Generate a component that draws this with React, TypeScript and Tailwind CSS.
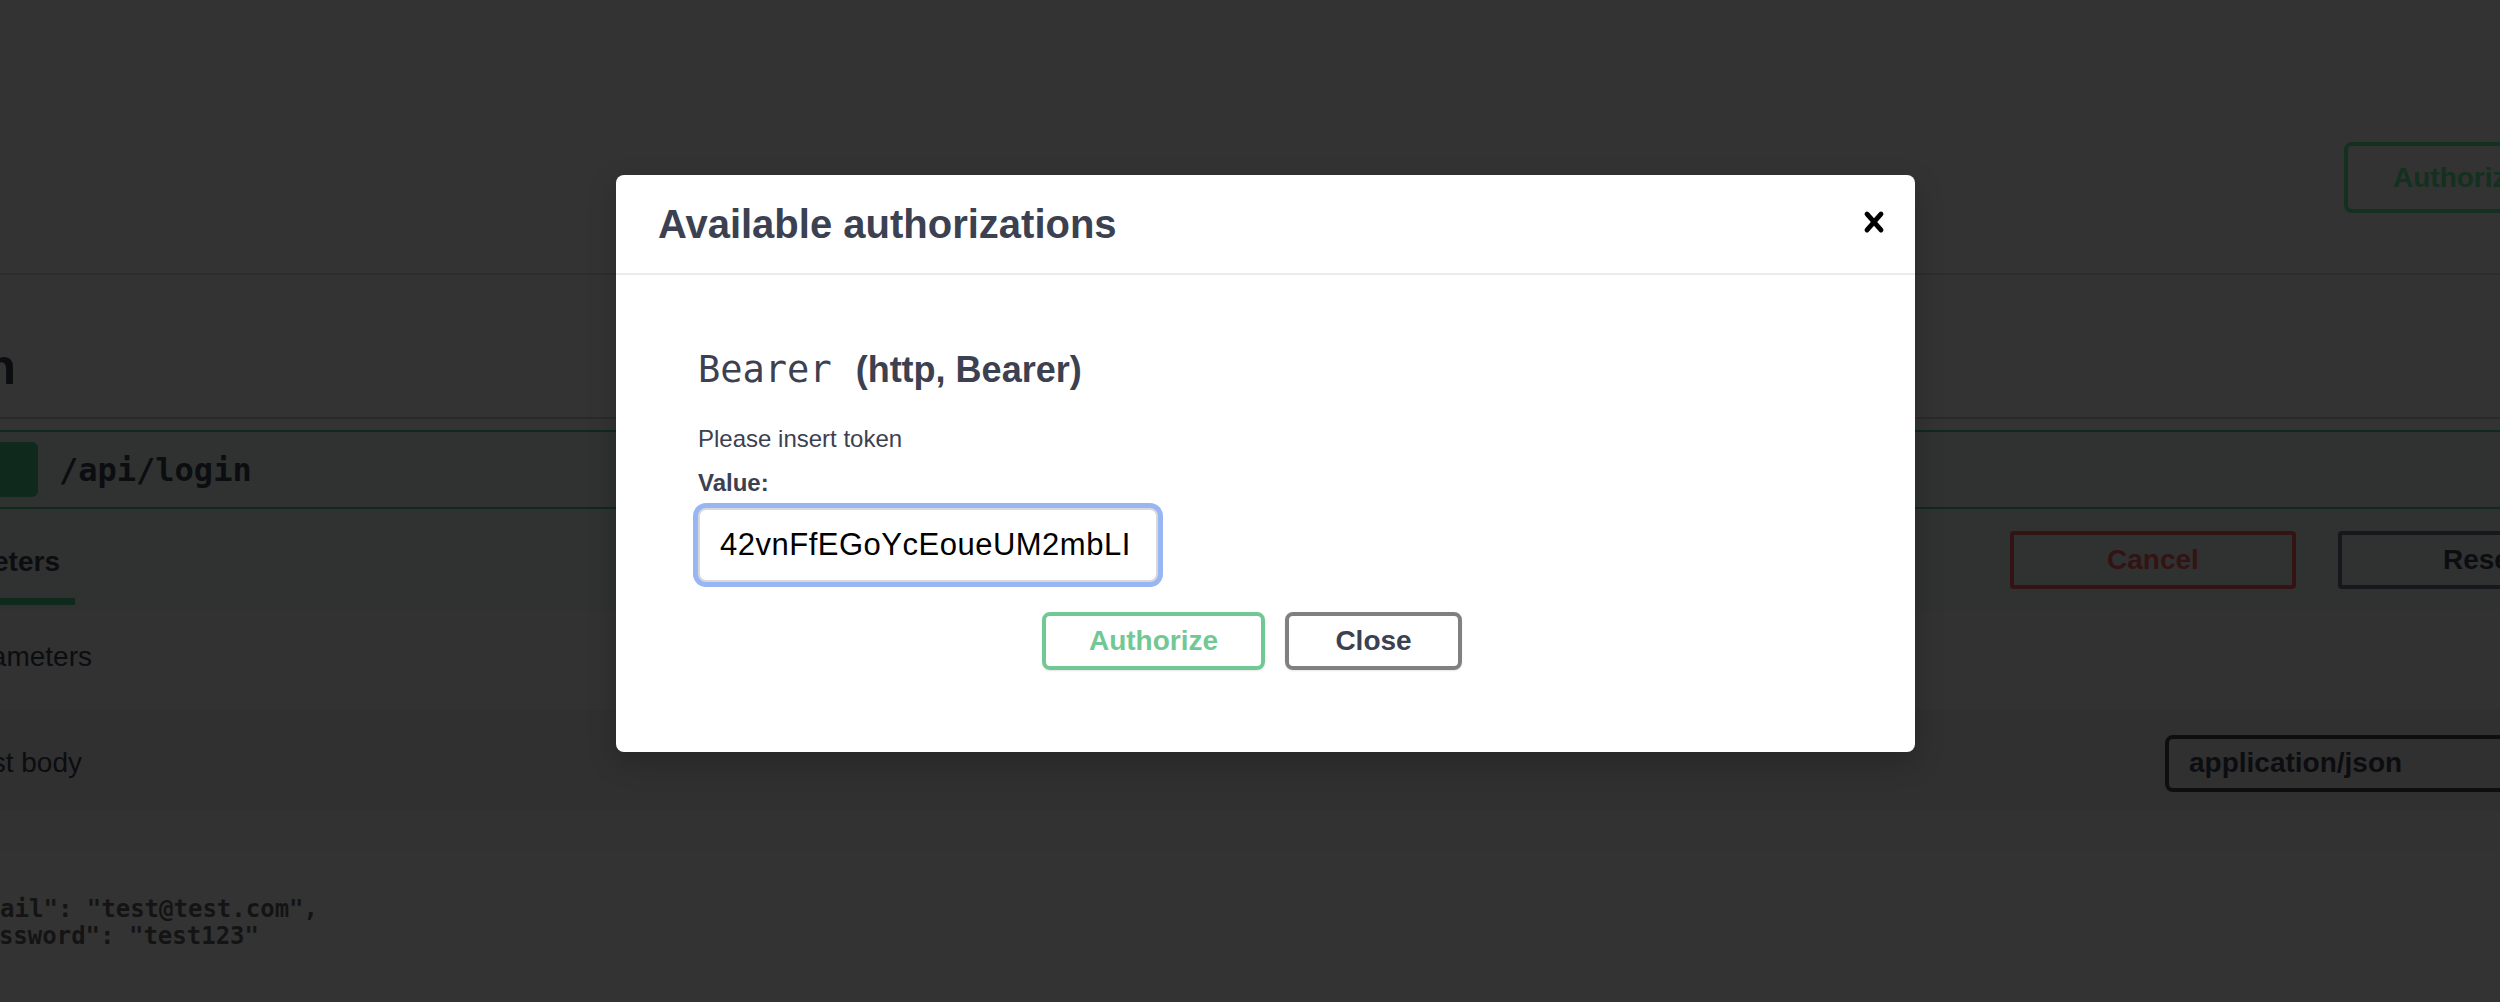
import React from "react";

const dimText = "text-[#0c0d10]";

function ClipLeft({ width, children, className }: { width: string; children: React.ReactNode; className?: string }) {
  return (
    <div className={`flex shrink-0 justify-end overflow-hidden ${width} ${className ?? ""}`}>
      <span className="whitespace-nowrap">{children}</span>
    </div>
  );
}

export default function App() {
  return (
    <div className="relative h-[1002px] w-[2500px] overflow-hidden bg-[#333333] font-['Liberation_Sans',Arial,sans-serif]">
      {/* dimmed page behind */}
      <div className="flex flex-col">
        {/* scheme container */}
        <div className="flex h-[275px] items-start border-b-2 border-[#2d2d2d] pl-[2344px] pt-[142px]">
          <div className="flex h-[71px] w-[260px] shrink-0 items-center rounded-[8px] border-4 border-[#14301f] pl-[45px] text-[28px] font-bold text-[#14301f]">
            Authorize
          </div>
        </div>
        {/* tag header */}
        <div className="flex h-[144px] items-start border-b-2 border-[#2a2a2b] pt-[62px]">
          <ClipLeft width="w-[16px]" className={`text-[50px] font-bold leading-[60px] ${dimText}`}>
            Authentication
          </ClipLeft>
        </div>
        {/* opblock */}
        <div className="mt-[11px] flex flex-col border-t-2 border-[#0f291d] bg-[#2f3231]">
          <div className="flex h-[77px] items-center gap-[21px] border-b-2 border-[#0f291d]">
            <div className="h-[55px] w-[38px] shrink-0 rounded-r-[6px] bg-[#0f291d]" />
            <span className={`font-['DejaVu_Sans_Mono',monospace] text-[32px] font-bold ${dimText}`}>/api/login</span>
          </div>
          {/* tabs row */}
          <div className="flex h-[101px] items-center">
            <div className="flex h-full w-[75px] shrink-0 flex-col justify-end">
              <div className="flex flex-1 items-center pt-[16px]">
                <ClipLeft width="w-[60px]" className={`text-[28px] font-bold ${dimText}`}>Parameters</ClipLeft>
              </div>
              <div className="mb-[5px] h-[7px] w-[75px] bg-[#0f2a1d]" />
            </div>
            <div className="ml-[1935px] flex shrink-0 items-center gap-[42px]">
              <div className="flex h-[58px] w-[286px] shrink-0 items-center justify-center rounded-[4px] border-4 border-[#331313] text-[28px] font-bold text-[#331313]">
                Cancel
              </div>
              <div className="flex h-[58px] w-[300px] shrink-0 items-center justify-start rounded-[4px] border-4 border-[#17181b] pl-[101px] text-[28px] font-bold text-[#0c0d10]">
                Reset
              </div>
            </div>
          </div>
          {/* no parameters */}
          <div className="flex h-[99px] items-center bg-[#313231] pb-[6px]">
            <ClipLeft width="w-[92px]" className={`text-[28px] ${dimText}`}>No parameters</ClipLeft>
          </div>
          {/* request body */}
          <div className="flex h-[102px] items-center bg-[#303030] pt-[6px]">
            <ClipLeft width="w-[82px]" className={`text-[28px] ${dimText}`}>Request body</ClipLeft>
            <div className="ml-[2083px] flex h-[57px] w-[400px] shrink-0 items-center rounded-[8px] border-4 border-[#0d0e10] pl-[20px] text-[28px] font-bold text-[#0c0d10]">
              application/json
            </div>
          </div>
          <div className="h-[39px] bg-[#323232]" />
        </div>
        {/* code block */}
        <div className={`flex flex-col pt-[46px] font-['DejaVu_Sans_Mono',monospace] text-[24px] font-bold leading-[27px] text-[#141414]`}>
          <ClipLeft width="w-[318px]">{`  "email": "test@test.com",`}</ClipLeft>
          <ClipLeft width="w-[259px]">{`  "password": "test123"`}</ClipLeft>
        </div>
      </div>

      {/* modal */}
      <div className="absolute left-[616px] top-[175px] flex w-[1299px] flex-col rounded-[8px] bg-white shadow-[0_10px_30px_rgba(0,0,0,0.2)]">
        <div className="flex h-[100px] items-center justify-between border-b-2 border-[#ebebeb] pl-[42px] pr-[21px]">
          <h3 className="text-[40px] font-bold leading-[40px] text-[#3b4151]">Available authorizations</h3>
          <svg width="40" height="40" viewBox="0 0 20 20" className="mb-[4px]" aria-hidden="true">
            <path
              fill="#000"
              d="M14.348 14.849a1.2 1.2 0 0 1-1.697 0L10 11.819l-2.651 3.029a1.2 1.2 0 1 1-1.697-1.697l2.758-3.15-2.759-3.152a1.2 1.2 0 1 1 1.697-1.697L10 8.183l2.651-3.031a1.2 1.2 0 1 1 1.697 1.697l-2.758 3.152 2.758 3.15a1.2 1.2 0 0 1 0 1.698z"
            />
          </svg>
        </div>
        <div className="flex flex-col pb-[82px] pl-[82px] pt-[73px]">
          <h4 className="flex items-baseline text-[36px] font-bold leading-[44px] text-[#3b4151]">
            <code className="font-['DejaVu_Sans_Mono',monospace] text-[37px] font-normal">Bearer</code>
            <span className="ml-[24px]">(http, Bearer)</span>
          </h4>
          <p className="mt-[32px] text-[24px] leading-[30px] text-[#3b4151]">Please insert token</p>
          <label className="mt-[14px] text-[24px] font-bold leading-[30px] text-[#3b4151]">Value:</label>
          <div className="mt-[10px] flex h-[74px] w-[460px] items-center overflow-hidden rounded-[8px] border-2 border-[#d9d9d9] bg-white pl-[20px] pr-[12px] shadow-[0_0_0_5px_#98b5f4]">
            <span className="whitespace-nowrap text-[31px] tracking-[0.5px] text-black">42vnFfEGoYcEoueUM2mbLI</span>
          </div>
          <div className="mt-[30px] flex justify-center gap-[20px] pr-[109px]">
            <div className="flex h-[58px] w-[223px] items-center justify-center rounded-[8px] border-4 border-[#72c895] text-[28px] font-bold text-[#72c895] shadow-[0_1px_2px_rgba(0,0,0,0.1)]">
              Authorize
            </div>
            <div className="flex h-[58px] w-[177px] items-center justify-center rounded-[8px] border-4 border-[#808080] text-[28px] font-bold text-[#3b4151] shadow-[0_1px_2px_rgba(0,0,0,0.1)]">
              Close
            </div>
          </div>
        </div>
      </div>
    </div>
  );
}
